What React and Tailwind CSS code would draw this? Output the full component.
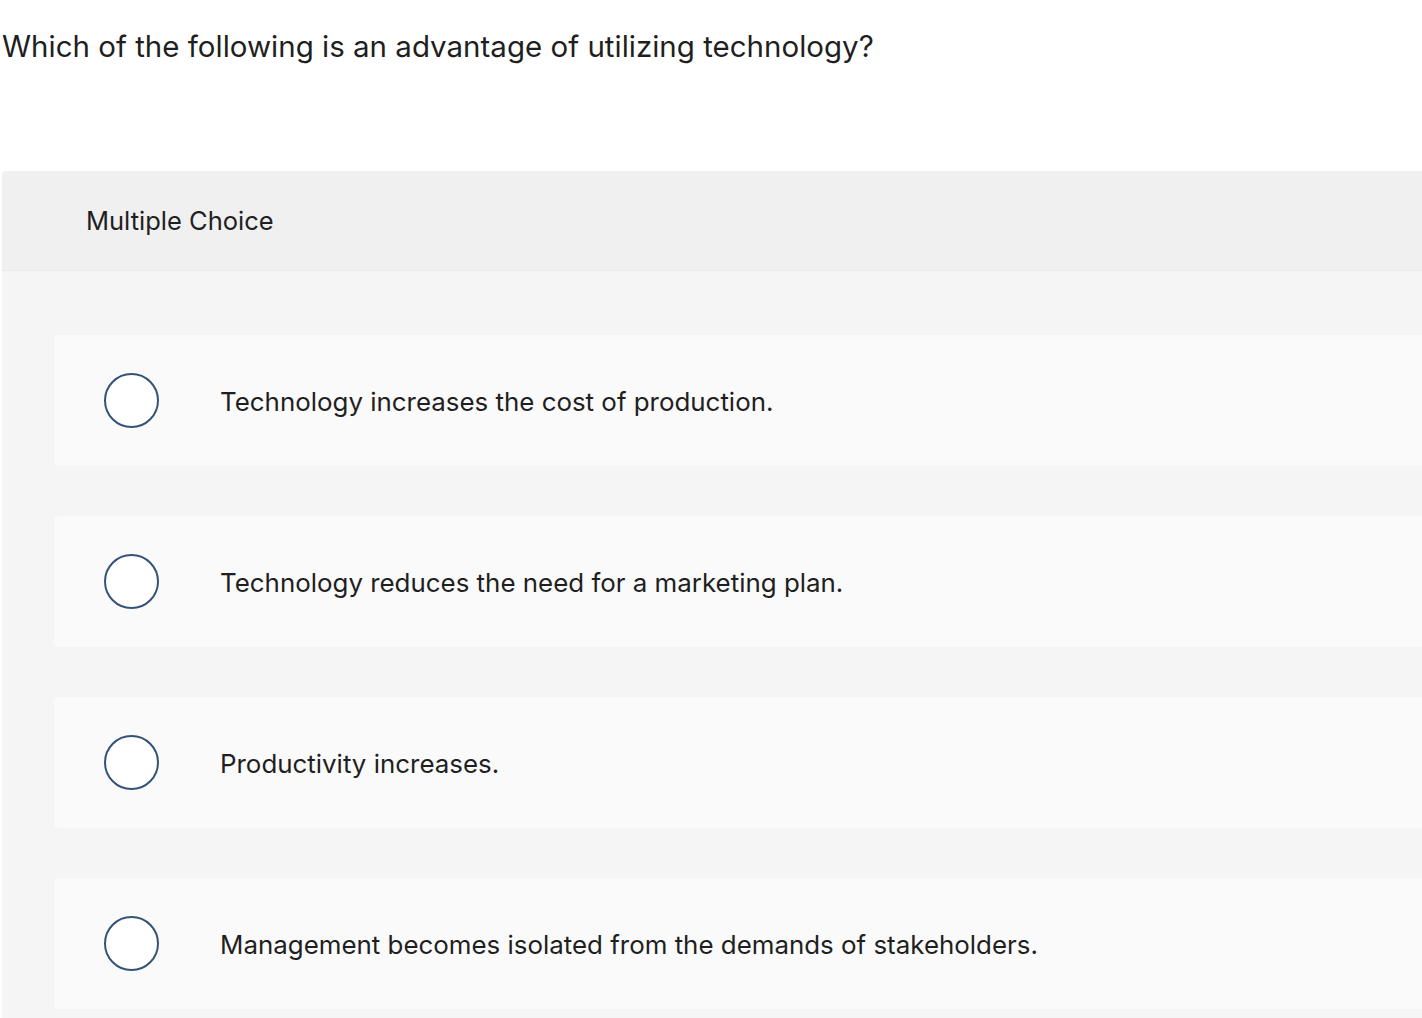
export default function App() {
  const options = [
    "Technology increases the cost of production.",
    "Technology reduces the need for a marketing plan.",
    "Productivity increases.",
    "Management becomes isolated from the demands of stakeholders.",
  ];
  return (
    <div className="min-h-[1018px] bg-white text-[#1f1f1f]" style={{ fontFamily: "Inter, 'Noto Sans', sans-serif" }}>
      <div className="pl-[2px] pt-[26px] h-[171px]">
        <h1 className="text-[29.5px] leading-[40px] font-normal">Which of the following is an advantage of utilizing technology?</h1>
      </div>
      <div className="ml-[2px] rounded-tl-[4px] overflow-hidden bg-[#f5f5f5]">
        <div className="h-[100px] bg-[#f0f0f0] border-b border-[#ebebeb] flex items-center pl-[84px]">
          <span className="text-[25.5px] pt-[2px]">Multiple Choice</span>
        </div>
        <div className="pl-[52px] pt-[64px] flex flex-col gap-[50px] pb-[9px]">
          {options.map((o) => (
            <div key={o} className="h-[131px] bg-[#fafafa] rounded-l-[4px] flex items-center">
              <div className="ml-[50px] w-[55px] h-[55px] rounded-full border-2 border-[#34527a] bg-white shrink-0" />
              <span className="ml-[61px] text-[25.9px] pt-[4px]">{o}</span>
            </div>
          ))}
        </div>
      </div>
    </div>
  );
}
